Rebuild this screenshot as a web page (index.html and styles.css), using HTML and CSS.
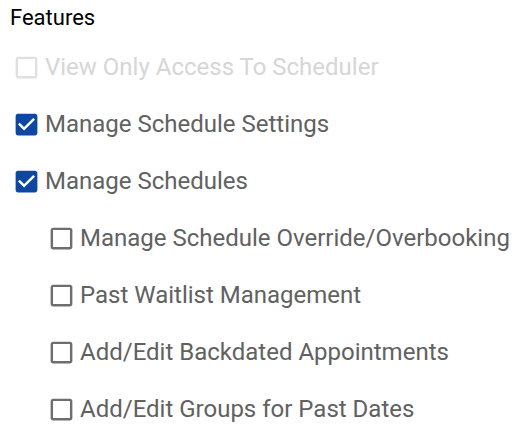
FILE: index.html
```html
<!DOCTYPE html>
<html>
<head>
    <meta charset="UTF-8">
    <title>Features</title>
    <link rel="stylesheet" href="styles.css">
</head>
<body>
    <div class="features">
        <div class="features-title">Features</div>
        <div class="feature-list">
            <label class="feature disabled">
                <svg class="box" viewBox="0 0 24 24"><path d="M19 5v14H5V5h14m0-2H5c-1.1 0-2 .9-2 2v14c0 1.1.9 2 2 2h14c1.1 0 2-.9 2-2V5c0-1.1-.9-2-2-2z" /></svg>
                <span>View Only Access To Scheduler</span>
            </label>
            <label class="feature">
                <svg class="box checked" viewBox="0 0 24 24"><path d="M19 3H5c-1.11 0-2 .9-2 2v14c0 1.1.89 2 2 2h14c1.11 0 2-.9 2-2V5c0-1.1-.89-2-2-2zm-9 14l-5-5 1.41-1.41L10 14.17l7.59-7.59L19 8l-9 9z" /></svg>
                <span>Manage Schedule Settings</span>
            </label>
            <label class="feature">
                <svg class="box checked" viewBox="0 0 24 24"><path d="M19 3H5c-1.11 0-2 .9-2 2v14c0 1.1.89 2 2 2h14c1.11 0 2-.9 2-2V5c0-1.1-.89-2-2-2zm-9 14l-5-5 1.41-1.41L10 14.17l7.59-7.59L19 8l-9 9z" /></svg>
                <span>Manage Schedules</span>
            </label>
            <label class="feature sub">
                <svg class="box" viewBox="0 0 24 24"><path d="M19 5v14H5V5h14m0-2H5c-1.1 0-2 .9-2 2v14c0 1.1.9 2 2 2h14c1.1 0 2-.9 2-2V5c0-1.1-.9-2-2-2z" /></svg>
                <span>Manage Schedule Override/Overbooking</span>
            </label>
            <label class="feature sub">
                <svg class="box" viewBox="0 0 24 24"><path d="M19 5v14H5V5h14m0-2H5c-1.1 0-2 .9-2 2v14c0 1.1.9 2 2 2h14c1.1 0 2-.9 2-2V5c0-1.1-.9-2-2-2z" /></svg>
                <span>Past Waitlist Management</span>
            </label>
            <label class="feature sub">
                <svg class="box" viewBox="0 0 24 24"><path d="M19 5v14H5V5h14m0-2H5c-1.1 0-2 .9-2 2v14c0 1.1.9 2 2 2h14c1.1 0 2-.9 2-2V5c0-1.1-.9-2-2-2z" /></svg>
                <span>Add/Edit Backdated Appointments</span>
            </label>
            <label class="feature sub">
                <svg class="box" viewBox="0 0 24 24"><path d="M19 5v14H5V5h14m0-2H5c-1.1 0-2 .9-2 2v14c0 1.1.9 2 2 2h14c1.1 0 2-.9 2-2V5c0-1.1-.9-2-2-2z" /></svg>
                <span>Add/Edit Groups for Past Dates</span>
            </label>
        </div>
    </div>
</body>
</html>
```

FILE: styles.css
```css
body {
    margin: 0;
    background: #fff;
    font-family: Roboto, "Liberation Sans", sans-serif;
}
.features {
    padding: 4px 10px 0 10px;
}
.features-title {
    font-size: 22px;
    color: #000;
    line-height: 28px;
}
.feature-list {
    display: flex;
    flex-direction: column;
    gap: 27px;
    margin-top: 20px;
    padding-left: 2px;
}
.feature {
    display: flex;
    align-items: center;
    gap: 4px;
    font-size: 24px;
    line-height: 30px;
    color: #616161;
    white-space: nowrap;
}
.feature.sub {
    padding-left: 35px;
}
.box {
    width: 29px;
    height: 29px;
    flex-shrink: 0;
    fill: #6e6e6e;
}
.box.checked {
    fill: #0d47a1;
}
.feature.disabled {
    color: #d6d6d6;
}
.feature.disabled .box {
    fill: #e0e0e0;
}
```
